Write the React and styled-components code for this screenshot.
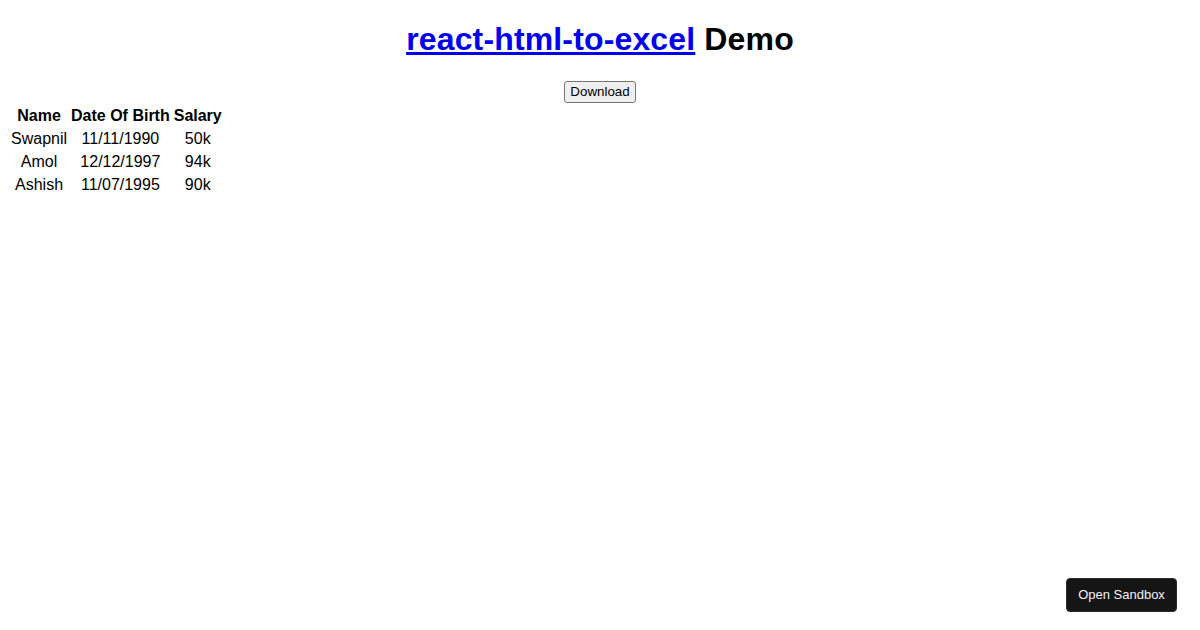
import React from "react";
import styled, { createGlobalStyle } from "styled-components";

const Global = createGlobalStyle`
  html, body {
    margin: 0;
    padding: 0;
    background: #fff;
  }
  body {
    font-family: "Liberation Sans", Arial, sans-serif;
    color: #000;
  }
`;

const Wrapper = styled.div`
  padding: 8px;
  text-align: center;
`;

const Title = styled.h1`
  font-size: 32px;
  font-weight: bold;
  letter-spacing: 0.15px;
  margin: 13.44px 0 21.44px;
`;

const TitleLink = styled.a`
  color: #0000ee;
  text-decoration: underline;
`;

const DownloadButton = styled.button`
  box-sizing: border-box;
  height: 22px;
  font-family: "Liberation Sans", Arial, sans-serif;
  font-size: 13.333px;
  padding: 0 5.5px;
  margin-top: 1px;
  background: #efefef;
  color: #000;
  border: 1px solid #767676;
  border-radius: 3px;
  cursor: pointer;
`;

const Table = styled.table`
  border-collapse: separate;
  border-spacing: 2px;
  font-size: 16px;
  margin-top: 0;
`;

const Th = styled.th`
  padding: 1px;
  line-height: 19px;
  font-weight: bold;
`;

const Td = styled.td`
  padding: 1px;
  line-height: 19px;
`;

const SandboxButton = styled.a`
  position: fixed;
  right: 23px;
  bottom: 18px;
  display: flex;
  align-items: center;
  justify-content: center;
  width: 111px;
  height: 34px;
  box-sizing: border-box;
  background: #151515;
  color: #f2f2f2;
  border-radius: 4px;
  font-family: "Liberation Sans", Arial, sans-serif;
  font-size: 13px;
  text-decoration: none;
  border: 1px solid #2a2a2a;
  padding-bottom: 1px;
`;

const rows = [
  { name: "Swapnil", dob: "11/11/1990", salary: "50k" },
  { name: "Amol", dob: "12/12/1997", salary: "94k" },
  { name: "Ashish", dob: "11/07/1995", salary: "90k" },
];

export default function App() {
  return (
    <>
      <Global />
      <Wrapper>
        <Title>
          <TitleLink href="#">react-html-to-excel</TitleLink> Demo
        </Title>
        <DownloadButton>Download</DownloadButton>
        <Table>
          <thead>
            <tr>
              <Th>Name</Th>
              <Th>Date Of Birth</Th>
              <Th>Salary</Th>
            </tr>
          </thead>
          <tbody>
            {rows.map((r) => (
              <tr key={r.name}>
                <Td>{r.name}</Td>
                <Td>{r.dob}</Td>
                <Td>{r.salary}</Td>
              </tr>
            ))}
          </tbody>
        </Table>
      </Wrapper>
      <SandboxButton href="#">Open Sandbox</SandboxButton>
    </>
  );
}
